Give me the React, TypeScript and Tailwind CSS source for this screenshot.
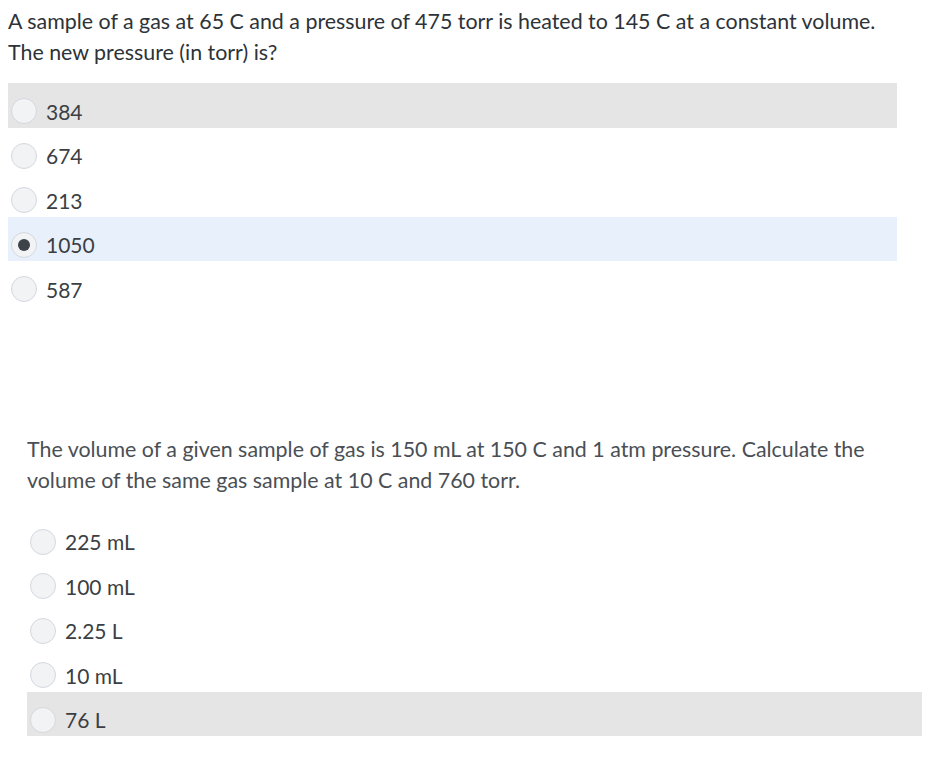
import React from "react";

type Opt = { label: string; bg?: string; checked?: boolean };

function Radio({ checked }: { checked?: boolean }) {
  return (
    <span className="flex h-[26px] w-[26px] shrink-0 items-center justify-center rounded-full border border-[#d3d8df] bg-[#f2f3f5]">
      {checked && <span className="h-[12px] w-[12px] rounded-full bg-[#3d4349]" />}
    </span>
  );
}

function Options({ opts, width }: { opts: Opt[]; width: string }) {
  return (
    <div className={"flex flex-col " + width}>
      {opts.map((o) => (
        <div key={o.label} className={"flex h-[44.5px] items-center pl-[3px] pt-[12px] " + (o.bg ?? "")}>
          <Radio checked={o.checked} />
          <span className="ml-[9px] text-[21px] leading-none text-[#3b3f44]">{o.label}</span>
        </div>
      ))}
    </div>
  );
}

export default function App() {
  return (
    <div className="min-h-[764px] w-[940px] bg-white" style={{ fontFamily: "Lato, 'Open Sans', sans-serif" }}>
      <div className="pl-[8px] pt-[6px]">
        <p className="w-[920px] text-[21.4px] leading-[31px] text-[#2d3338]">
          A sample of a gas at 65 C and a pressure of 475 torr is heated to 145 C at a constant volume.
          <br />
          The new pressure (in torr) is?
        </p>
        <div className="mt-[15px]">
          <Options
            width="w-[889px]"
            opts={[
              { label: "384", bg: "bg-[#e5e5e5]" },
              { label: "674" },
              { label: "213" },
              { label: "1050", bg: "bg-[#e8f1fb]", checked: true },
              { label: "587" },
            ]}
          />
        </div>
      </div>
      <div className="pl-[27px] pt-[128px]">
        <p className="w-[895px] text-[21.4px] leading-[31px] text-[#4a4f55]">
          The volume of a given sample of gas is 150 mL at 150 C and 1 atm pressure. Calculate the volume of the same gas sample at 10 C and 760 torr.
        </p>
        <div className="mt-[18px]">
          <Options
            width="w-[895px]"
            opts={[
              { label: "225 mL" },
              { label: "100 mL" },
              { label: "2.25 L" },
              { label: "10 mL" },
              { label: "76 L", bg: "bg-[#e5e5e5]" },
            ]}
          />
        </div>
      </div>
    </div>
  );
}
